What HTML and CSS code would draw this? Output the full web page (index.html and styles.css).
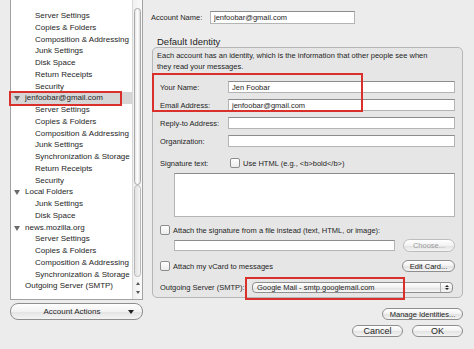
FILE: index.html
```html
<!DOCTYPE html>
<html>
<head>
<meta charset="utf-8">
<link rel="stylesheet" href="styles.css">
</head>
<body>
<div class="window">
  <div class="sidebar">
    <div class="listbox">
      <ul class="tree">
        <li class="sub">Server Settings</li>
        <li class="sub">Copies &amp; Folders</li>
        <li class="sub">Composition &amp; Addressing</li>
        <li class="sub">Junk Settings</li>
        <li class="sub">Disk Space</li>
        <li class="sub">Return Receipts</li>
        <li class="sub">Security</li>
        <li class="top selected"><span class="twisty"></span>jenfoobar@gmail.com</li>
        <li class="sub">Server Settings</li>
        <li class="sub">Copies &amp; Folders</li>
        <li class="sub">Composition &amp; Addressing</li>
        <li class="sub">Junk Settings</li>
        <li class="sub">Synchronization &amp; Storage</li>
        <li class="sub">Return Receipts</li>
        <li class="sub">Security</li>
        <li class="top"><span class="twisty"></span>Local Folders</li>
        <li class="sub">Junk Settings</li>
        <li class="sub">Disk Space</li>
        <li class="top"><span class="twisty"></span>news.mozilla.org</li>
        <li class="sub">Server Settings</li>
        <li class="sub">Copies &amp; Folders</li>
        <li class="sub">Composition &amp; Addressing</li>
        <li class="sub">Synchronization &amp; Storage</li>
        <li class="top plain">Outgoing Server (SMTP)</li>
      </ul>
      <div class="scrollbar">
        <div class="sb-thumb"></div>
        <div class="sb-track"></div>
        <div class="sb-arrows"><span class="arr-up"></span><span class="arr-down"></span></div>
      </div>
    </div>
    <div class="btn actions-btn"><span class="actions-label">Account Actions</span><span class="caret"></span></div>
  </div>

  <div class="main">
    <div class="acct-row">
      <span class="lbl">Account Name:</span>
      <div class="field acct-field">jenfoobar@gmail.com</div>
    </div>
    <div class="group-title">Default Identity</div>
    <div class="group">
      <p class="desc">Each account has an identity, which is the information that other people see when they read your messages.</p>
      <div class="form">
        <span class="lbl">Your Name:</span><div class="field">Jen Foobar</div>
        <span class="lbl">Email Address:</span><div class="field">jenfoobar@gmail.com</div>
        <span class="lbl">Reply-to Address:</span><div class="field"></div>
        <span class="lbl">Organization:</span><div class="field"></div>
      </div>
      <div class="sig-row">
        <span class="lbl sig-lbl">Signature text:</span>
        <span class="check"></span><span class="lbl">Use HTML (e.g., &lt;b&gt;bold&lt;/b&gt;)</span>
      </div>
      <div class="field textarea"></div>
      <div class="check-row attach-row"><span class="check"></span><span class="lbl">Attach the signature from a file instead (text, HTML, or image):</span></div>
      <div class="file-row">
        <div class="field file-field"></div>
        <div class="btn disabled choose-btn">Choose...</div>
      </div>
      <div class="check-row vcard-row">
        <span class="check"></span><span class="lbl">Attach my vCard to messages</span>
        <div class="btn edit-btn">Edit Card...</div>
      </div>
      <div class="smtp-row">
        <span class="lbl">Outgoing Server (SMTP):</span>
        <div class="select"><span class="sel-text">Google Mail - smtp.googlemail.com</span><span class="stepper"><i class="st-up"></i><i class="st-down"></i></span></div>
      </div>
    </div>
    <div class="btn-row manage-row"><div class="btn manage-btn">Manage Identities...</div></div>
    <div class="btn-row ok-row"><div class="btn dlg-btn">Cancel</div><div class="btn dlg-btn">OK</div></div>
  </div>
</div>
<div class="annot annot-account"></div>
<div class="annot annot-identity"></div>
<div class="annot annot-smtp"></div>
</body>
</html>
```

FILE: styles.css
```css
* { box-sizing: border-box; }
html, body { margin: 0; padding: 0; }
body {
  width: 474px;
  height: 349px;
  overflow: hidden;
  background: #ececec;
  font-family: "Liberation Sans", Arial, sans-serif;
  font-size: 8px;
  color: #1e1e1e;
  position: relative;
}
.window { display: flex; }

/* ---------- sidebar ---------- */
.sidebar { margin-left: 10px; width: 133px; display: flex; flex-direction: column; }
.listbox {
  height: 300px;
  display: flex;
  background: #fff;
  border: 1px solid #a2a2a2;
  border-top: none;
}
.tree { list-style: none; margin: 0; padding: 10px 0 0 0; width: 121px; }
.tree li { height: 11.75px; line-height: 11.75px; white-space: nowrap; position: relative; }
.tree li.sub { padding-left: 24px; }
.tree li.top { padding-left: 14px; }
.tree li.selected { background: #d6d6d6; }
.twisty {
  position: absolute; left: 3px; top: 4px;
  width: 0; height: 0;
  border-left: 3px solid transparent;
  border-right: 3px solid transparent;
  border-top: 5px solid #6a6a6a;
}
.scrollbar {
  width: 10px;
  display: flex; flex-direction: column;
  border-left: 1px solid #d9d9d9;
  background: linear-gradient(to right, #f0f0f0, #fafafa);
  padding-top: 8px;
}
.sb-thumb {
  height: 177px;
  margin: 0 1px;
  border: 1px solid #a8a8a8;
  border-radius: 4px;
  background: linear-gradient(to right, #e6e6e6, #ffffff 50%, #dcdcdc);
}
.sb-track {
  height: 92px;
  margin: 0 1px;
  border: 1px solid #b8b8b8;
  border-radius: 4px;
  background: linear-gradient(to right, #e2e2e2, #f4f4f4);
}
.sb-arrows { flex: 1; display: flex; flex-direction: column; align-items: center; justify-content: space-around; padding: 2px 0; }
.arr-up, .arr-down { width: 0; height: 0; border-left: 2px solid transparent; border-right: 2px solid transparent; }
.arr-up { border-bottom: 3px solid #555; }
.arr-down { border-top: 3px solid #555; }

.btn {
  border: 1px solid #8e8e8e;
  border-radius: 8px;
  background: linear-gradient(#ffffff, #f2f2f2 50%, #e2e2e2 51%, #f4f4f4);
  display: flex; align-items: center; justify-content: center;
  white-space: nowrap;
  color: #1e1e1e;
}
.actions-btn {
  margin-top: 3px; height: 17px; width: 133px;
  position: relative;
  padding-right: 9px;
}
.actions-label { font-size: 8px; }
.caret {
  position: absolute; right: 8px; top: 6px;
  width: 0; height: 0;
  border-left: 3px solid transparent;
  border-right: 3px solid transparent;
  border-top: 4px solid #222;
}

/* ---------- main ---------- */
.main { margin-left: 8px; width: 312px; padding-top: 11px; display: flex; flex-direction: column; font-size: 7.5px; }
.acct-row { display: flex; align-items: center; height: 13px; }
.acct-row .lbl { width: 59px; }
.field {
  background: #fff;
  border: 1px solid #b4b4b4;
  border-top-color: #8c8c8c;
  padding-left: 3px;
  display: flex; align-items: center;
  white-space: nowrap;
}
.acct-field { width: 145px; height: 13px; }
.group-title { margin-top: 12px; height: 11px; line-height: 11px; padding-left: 6px; font-size: 9.5px; }
.group {
  margin-left: 1px;
  width: 311px; height: 251px;
  border: 1px solid #b6b6b6;
  border-radius: 5px;
  background: #e6e6e6;
  padding: 2px 7px 0 3px;
  display: flex; flex-direction: column;
}
.desc { margin: 0 0 0 1px; line-height: 11px; max-width: 278px; }
.form {
  margin-top: 9px;
  padding-left: 4px;
  display: grid;
  grid-template-columns: 68px 227px;
  grid-auto-rows: 12px;
  row-gap: 6px;
  align-items: center;
}
.form .field { height: 12px; }
.sig-row { margin-top: 11px; height: 10px; display: flex; align-items: center; padding-left: 4px; }
.sig-lbl { width: 70px; }
.check {
  width: 10px; height: 10px;
  border: 1px solid #8e8e8e;
  border-radius: 2px;
  background: linear-gradient(#ffffff, #ececec);
  margin-right: 3px;
  flex: none;
}
.textarea { margin-top: 5px; margin-left: 18px; width: 281px; height: 44px; }
.check-row { display: flex; align-items: center; padding-left: 4px; }
.attach-row { margin-top: 8px; height: 10px; }
.file-row { margin-top: 4px; height: 13px; display: flex; align-items: center; }
.file-field { margin-left: 18px; width: 221px; height: 11px; }
.choose-btn { margin-left: 8px; width: 52px; height: 13px; }
.btn.disabled { border-color: #bdbdbd; color: #9a9a9a; }
.vcard-row { margin-top: 8px; height: 12px; }
.edit-btn { margin-left: auto; margin-right: 0; width: 53px; height: 12px; }
.smtp-row { margin-top: 10px; height: 11px; display: flex; align-items: center; padding-left: 4px; }
.smtp-row .lbl { width: 92px; }
.select {
  width: 201px; height: 11px;
  border: 1px solid #8e8e8e;
  border-radius: 4px;
  background: linear-gradient(#ffffff, #f0f0f0 50%, #e2e2e2 51%, #f6f6f6);
  display: flex; align-items: center;
}
.sel-text { flex: 1; padding-left: 4px; }
.stepper {
  width: 12px; height: 100%;
  border-left: 1px solid #b0b0b0;
  display: flex; flex-direction: column; align-items: center; justify-content: center; gap: 1px;
}
.st-up, .st-down { width: 0; height: 0; border-left: 2px solid transparent; border-right: 2px solid transparent; }
.st-up { border-bottom: 2px solid #222; }
.st-down { border-top: 2px solid #222; }

.btn-row { display: flex; justify-content: flex-end; }
.manage-row { margin-top: 10px; }
.manage-btn { width: 81px; height: 12px; }
.ok-row { margin-top: 5px; gap: 9px; }
.dlg-btn { width: 51px; height: 12px; font-size: 9px; }

/* ---------- annotations ---------- */
.annot { position: absolute; border: 2.5px solid #d9302b; }
.annot-account { left: 9px; top: 91px; width: 113px; height: 15px; }
.annot-identity { left: 152px; top: 73px; width: 211px; height: 39px; }
.annot-smtp { left: 245px; top: 277px; width: 160px; height: 23px; }
```
